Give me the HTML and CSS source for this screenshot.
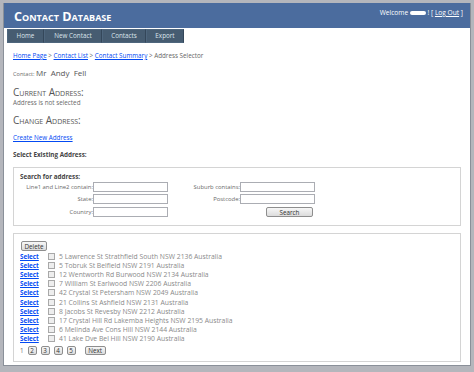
FILE: index.html
```html
<!DOCTYPE html>
<html lang="en">
<head>
    <meta charset="UTF-8">
    <title>Address Selector</title>
    <link rel="stylesheet" href="styles.css">
</head>
<body>
<div class="page">
    <div class="header">
        <div class="title">Contact Database</div>
        <div class="login">Welcome <span class="who"></span> ! [ <a href="#">Log Out</a> ]</div>
    </div>
    <ul class="menu">
        <li class="m1">Home</li>
        <li class="m2">New Contact</li>
        <li class="m3">Contacts</li>
        <li class="m4">Export</li>
    </ul>

    <div class="main">
        <div class="crumbs">
            <a href="#">Home Page</a> &gt; <a href="#">Contact List</a> &gt; <a href="#">Contact Summary</a> &gt; Address Selector
        </div>
        <div class="contact">Contact: <span class="name">Mr&nbsp; Andy&nbsp; Fell</span></div>

        <h2>Current Address:</h2>
        <div class="note">Address is not selected</div>

        <h2 class="change">Change Address:</h2>
        <div class="create"><a href="#">Create New Address</a></div>

        <div class="sub">Select Existing Address:</div>

        <div class="box search">
            <div class="boxhead">Search for address:</div>
            <div class="fields">
                <label>Line1 and Line2 contain:</label><input type="text">
                <label>Suburb contains:</label><input type="text">
                <label>State:</label><input type="text">
                <label>Postcode:</label><input type="text">
                <label>Country:</label><input type="text">
                <span></span><button class="btn go">Search</button>
            </div>
        </div>

        <div class="box results">
            <button class="btn del">Delete</button>
            <ul class="rows">
                <li><a href="#">Select</a><input type="checkbox" class="pick"><span>5 Lawrence St Strathfield South NSW 2136 Australia</span></li>
                <li><a href="#">Select</a><input type="checkbox" class="pick"><span>5 Tobruk St Belfield NSW 2191 Australia</span></li>
                <li><a href="#">Select</a><input type="checkbox" class="pick"><span>12 Wentworth Rd Burwood NSW 2134 Australia</span></li>
                <li><a href="#">Select</a><input type="checkbox" class="pick"><span>7 William St Earlwood NSW 2206 Australia</span></li>
                <li><a href="#">Select</a><input type="checkbox" class="pick"><span>42 Crystal St Petersham NSW 2049 Australia</span></li>
                <li><a href="#">Select</a><input type="checkbox" class="pick"><span>21 Collins St Ashfield NSW 2131 Australia</span></li>
                <li><a href="#">Select</a><input type="checkbox" class="pick"><span>8 Jacobs St Revesby NSW 2212 Australia</span></li>
                <li><a href="#">Select</a><input type="checkbox" class="pick"><span>17 Crystal Hill Rd Lakemba Heights NSW 2195 Australia</span></li>
                <li><a href="#">Select</a><input type="checkbox" class="pick"><span>6 Melinda Ave Cons Hill NSW 2144 Australia</span></li>
                <li><a href="#">Select</a><input type="checkbox" class="pick"><span>41 Lake Dve Bel Hill NSW 2190 Australia</span></li>
            </ul>
            <div class="pager">
                <span>1</span>
                <button class="btn pg">2</button>
                <button class="btn pg">3</button>
                <button class="btn pg">4</button>
                <button class="btn pg">5</button>
                <button class="btn pg next">Next</button>
            </div>
        </div>
    </div>
</div>
</body>
</html>
```

FILE: styles.css
```css
body,ul,li,h2{
    margin:0;
    padding:0;
    list-style:none;
}
body{
    background:#b4b6bc;
    font-family:"Open Sans","DejaVu Sans",sans-serif;
    font-size:6.3px;
    color:#696969;
    padding:3px 3px 0 3px;
}
a{
    color:#034af3;
}
.page{
    background:#fff;
    border:1px solid #8a9099;
    border-top:none;
    padding-bottom:3px;
}

.header{
    background:#4b6c9e;
    height:25px;
    display:flex;
    justify-content:space-between;
    padding:0 7px 0 10px;
    color:#fff;
}
.title{
    font-size:12.6px;
    font-weight:bold;
    font-variant:small-caps;
    line-height:28px;
}
.login{
    padding-top:5px;
    font-size:6.6px;
}
.login a{
    color:#fff;
}
.who{
    display:inline-block;
    width:16px;
    height:4px;
    border-radius:2px;
    background:#fff;
    vertical-align:middle;
}

.menu{
    display:flex;
    margin:1px 0 0 3px;
}
.menu li{
    background:#465c71;
    border:1px solid #4e667d;
    border-right-color:#34475a;
    color:#dde4ec;
    line-height:12px;
    text-align:center;
    box-sizing:border-box;
    height:14px;
}
.m1{ width:37px; }
.m2{ width:58px; }
.m3{ width:44px; }
.m4{ width:38px; }

.main{
    padding:8px 9px 0 9px;
}
.crumbs{
    line-height:10px;
    color:#666;
}
.contact{
    margin-top:6px;
    line-height:12px;
    font-size:5.6px;
}
.name{
    font-size:8px;
    color:#555;
}
h2{
    margin-top:7px;
    font-size:10px;
    font-weight:normal;
    font-variant:small-caps;
    color:#555;
    line-height:11px;
}
.note{
    line-height:10px;
}
.change{
    margin-top:7px;
}
.create{
    margin-top:7px;
    line-height:10px;
}
.sub{
    margin-top:7px;
    line-height:10px;
    font-weight:bold;
    color:#444;
}

.box{
    border:1px solid #d4d4d4;
    padding:4px 6px 8px 6px;
}
.search{
    margin-top:7px;
}
.boxhead{
    font-weight:bold;
    color:#444;
    line-height:10px;
}
.fields{
    display:grid;
    grid-template-columns:73px 74px 73px 75px;
    row-gap:2px;
    align-items:center;
}
.fields label{
    text-align:right;
    line-height:10px;
    white-space:nowrap;
    font-size:5.9px;
}
.fields input{
    box-sizing:border-box;
    width:75px;
    height:10px;
    border:1px solid #abadb3;
    padding:0;
}
.btn{
    font-family:inherit;
    font-size:6.3px;
    color:#333;
    background:linear-gradient(#f7f7f7,#dcdcdc);
    border:1px solid #8e8e8e;
    border-radius:2px;
    padding:0;
    line-height:7px;
}
.go{
    width:47px;
    height:10px;
    margin:1px 0 0 26px;
}

.results{
    margin-top:7px;
    padding:7px 6px 6px 6px;
}
.del{
    display:block;
    width:26px;
    height:10px;
    margin-left:1px;
}
.rows{
    margin-top:1px;
}
.rows li{
    display:flex;
    align-items:center;
    height:9.1px;
    line-height:9px;
}
.rows a{
    font-weight:bold;
    width:27px;
}
.pick{
    appearance:none;
    box-sizing:border-box;
    width:7px;
    height:7px;
    margin:0 4px 0 1px;
    border:1px solid #a8a8a8;
    background:#eee;
}
.rows span{
    color:#8a8a8a;
    font-size:6.8px;
}
.pager{
    display:flex;
    align-items:center;
    gap:4px;
    margin-top:3px;
}
.pg{
    width:9px;
    height:9px;
}
.next{
    width:21px;
    margin-left:5px;
}
```
